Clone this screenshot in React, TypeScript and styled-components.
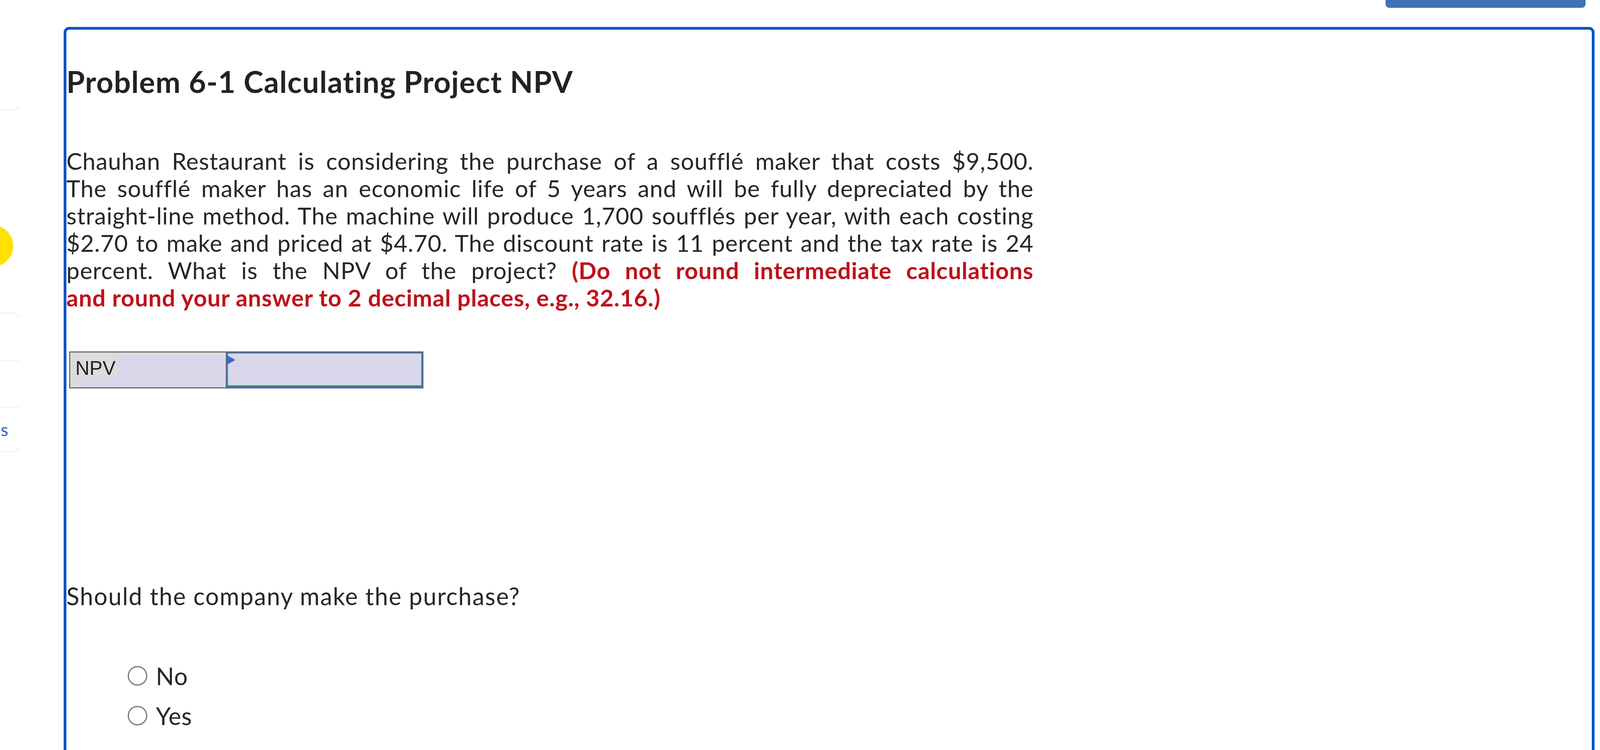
import styled, { createGlobalStyle } from 'styled-components';

const GlobalStyle = createGlobalStyle`
  html, body {
    margin: 0;
    padding: 0;
    background: #ffffff;
    overflow: hidden;
  }

  body {
    font-family: Lato, "Open Sans", sans-serif;
    color: #222222;
  }
`;

const Page = styled.div`
  display: flex;
  width: 100%;
  height: 100vh;
  overflow: hidden;
`;

const Sidebar = styled.aside`
  display: flex;
  flex-direction: column;
  flex: 0 0 51px;
  width: 51px;
  overflow: hidden;
`;

const SideCard = styled.div<{ $top: number }>`
  display: flex;
  flex-direction: column;
  flex: 0 0 auto;
  width: 300px;
  margin-left: -249px;
  margin-top: ${({ $top }) => $top}px;
  border: 2px solid #e9e9e9;
  border-top: ${({ $top }) => ($top === 0 ? 'none' : '2px solid #e9e9e9')};
  border-radius: ${({ $top }) => ($top === 0 ? '0 0 22px 0' : '0 22px 22px 0')};
  background: #ffffff;
`;

const SideSection = styled.div<{ $h: number }>`
  display: flex;
  align-items: center;
  justify-content: flex-end;
  height: ${({ $h }) => $h}px;
  padding-right: 32px;
  border-bottom: 2px solid #efefef;
  font-size: 44px;
  color: #2f5fb3;

  &:last-child {
    border-bottom: none;
  }
`;

const Dot = styled.div`
  flex: 0 0 106px;
  width: 106px;
  height: 106px;
  margin-top: 294px;
  margin-left: -72px;
  border-radius: 50%;
  background: #ffe100;
`;

const Main = styled.main`
  display: flex;
  flex-direction: column;
  flex: 1;
  min-width: 0;
  margin-left: 112px;
`;

const Header = styled.header`
  display: flex;
  justify-content: flex-end;
  align-items: flex-start;
  height: 69px;
  flex: 0 0 69px;
`;

const TopButton = styled.button`
  width: 512px;
  height: 20px;
  margin-right: 37px;
  border: none;
  border-radius: 0 0 9px 9px;
  background: #4171b6;
`;

const QuestionBox = styled.section`
  flex: 0 0 auto;
  min-height: 2100px;
  margin-right: 14px;
  border: 7px solid #0052cc;
  border-radius: 14px;
  background: #ffffff;
`;

const Title = styled.h1`
  margin: 88px 0 0;
  font-family: Lato, "Open Sans", sans-serif;
  font-size: 76px;
  line-height: 90px;
  font-weight: 700;
  letter-spacing: 1.4px;
  color: #222222;
`;

const Prompt = styled.p`
  width: 2476px;
  margin: 123px 0 0;
  font-size: 60px;
  line-height: 70px;
  letter-spacing: 1px;
  color: #262626;
`;

const Line = styled.span<{ $last?: boolean }>`
  display: block;
  white-space: nowrap;
  text-align: ${({ $last }) => ($last ? 'left' : 'justify')};
  text-align-last: ${({ $last }) => ($last ? 'left' : 'justify')};
`;

const Warning = styled.strong`
  font-weight: 700;
  color: #bf111b;
`;

const AnswerTable = styled.div`
  display: grid;
  grid-template-columns: 401px 506px;
  height: 95px;
  margin: 103px 0 0 7px;
`;

const LabelCell = styled.div`
  display: flex;
  align-items: flex-start;
  padding: 6px 0 0 10px;
  border: 3px solid #6e6e6e;
  border-right: none;
  box-shadow: inset 0 9px 0 #dcdcdc, inset 13px 0 0 #dcdcdc;
  background: #dbd6ea;
`;

const LabelText = styled.span`
  padding: 12px 5px 0 3px;
  background: #dcdcdc;
  font-family: "Liberation Sans", Arial, sans-serif;
  font-size: 50px;
  line-height: 45px;
  color: #1e1e1e;
`;

const InputCell = styled.div`
  position: relative;
  border: 5px solid #4f6d8b;
  box-shadow: inset 0 -3px 0 #3d73c9, inset 0 0 0 2px #9bd8f5, inset 0 -10px 0 #c6e3cf;
  background: #dcd6ec;
`;

const Marker = styled.span`
  position: absolute;
  top: 6px;
  left: 0;
  width: 0;
  height: 0;
  border-top: 11px solid transparent;
  border-bottom: 11px solid transparent;
  border-left: 20px solid #3a6dcb;
`;

const Question = styled.p`
  margin: 497px 0 0;
  font-size: 61px;
  line-height: 70px;
  letter-spacing: 2px;
  color: #262626;
`;

const Options = styled.div`
  display: flex;
  flex-direction: column;
  gap: 32px;
  margin: 134px 0 0 157px;
`;

const Option = styled.label`
  display: flex;
  align-items: center;
  gap: 22px;
  height: 70px;
  font-size: 61px;
  letter-spacing: 1px;
  color: #262626;
`;

const RadioCircle = styled.span`
  box-sizing: border-box;
  flex: 0 0 50px;
  width: 50px;
  height: 50px;
  border: 3px solid #767676;
  border-radius: 50%;
  background: #ffffff;
`;

const App = () => {
  return (
    <>
      <GlobalStyle />
      <Page>
        <Sidebar>
          <SideCard $top={0}>
            <SideSection $h={281} />
          </SideCard>
          <Dot />
          <SideCard $top={118}>
            <SideSection $h={120} />
            <SideSection $h={117} />
            <SideSection $h={112}>s</SideSection>
          </SideCard>
        </Sidebar>
        <Main>
          <Header>
            <TopButton aria-label="Submit" />
          </Header>
          <QuestionBox>
            <Title>Problem 6-1 Calculating Project NPV</Title>
            <Prompt>
              <Line>Chauhan Restaurant is considering the purchase of a soufflé maker that costs $9,500.</Line>
              <Line>The soufflé maker has an economic life of 5 years and will be fully depreciated by the</Line>
              <Line>straight-line method. The machine will produce 1,700 soufflés per year, with each costing</Line>
              <Line>$2.70 to make and priced at $4.70. The discount rate is 11 percent and the tax rate is 24</Line>
              <Line>
                percent. What is the NPV of the project?{' '}
                <Warning>(Do not round intermediate calculations</Warning>
              </Line>
              <Line $last>
                <Warning>and round your answer to 2 decimal places, e.g., 32.16.)</Warning>
              </Line>
            </Prompt>
            <AnswerTable>
              <LabelCell>
                <LabelText>NPV</LabelText>
              </LabelCell>
              <InputCell>
                <Marker />
              </InputCell>
            </AnswerTable>
            <Question>Should the company make the purchase?</Question>
            <Options>
              <Option>
                <RadioCircle />
                No
              </Option>
              <Option>
                <RadioCircle />
                Yes
              </Option>
            </Options>
          </QuestionBox>
        </Main>
      </Page>
    </>
  );
};

export default App;
